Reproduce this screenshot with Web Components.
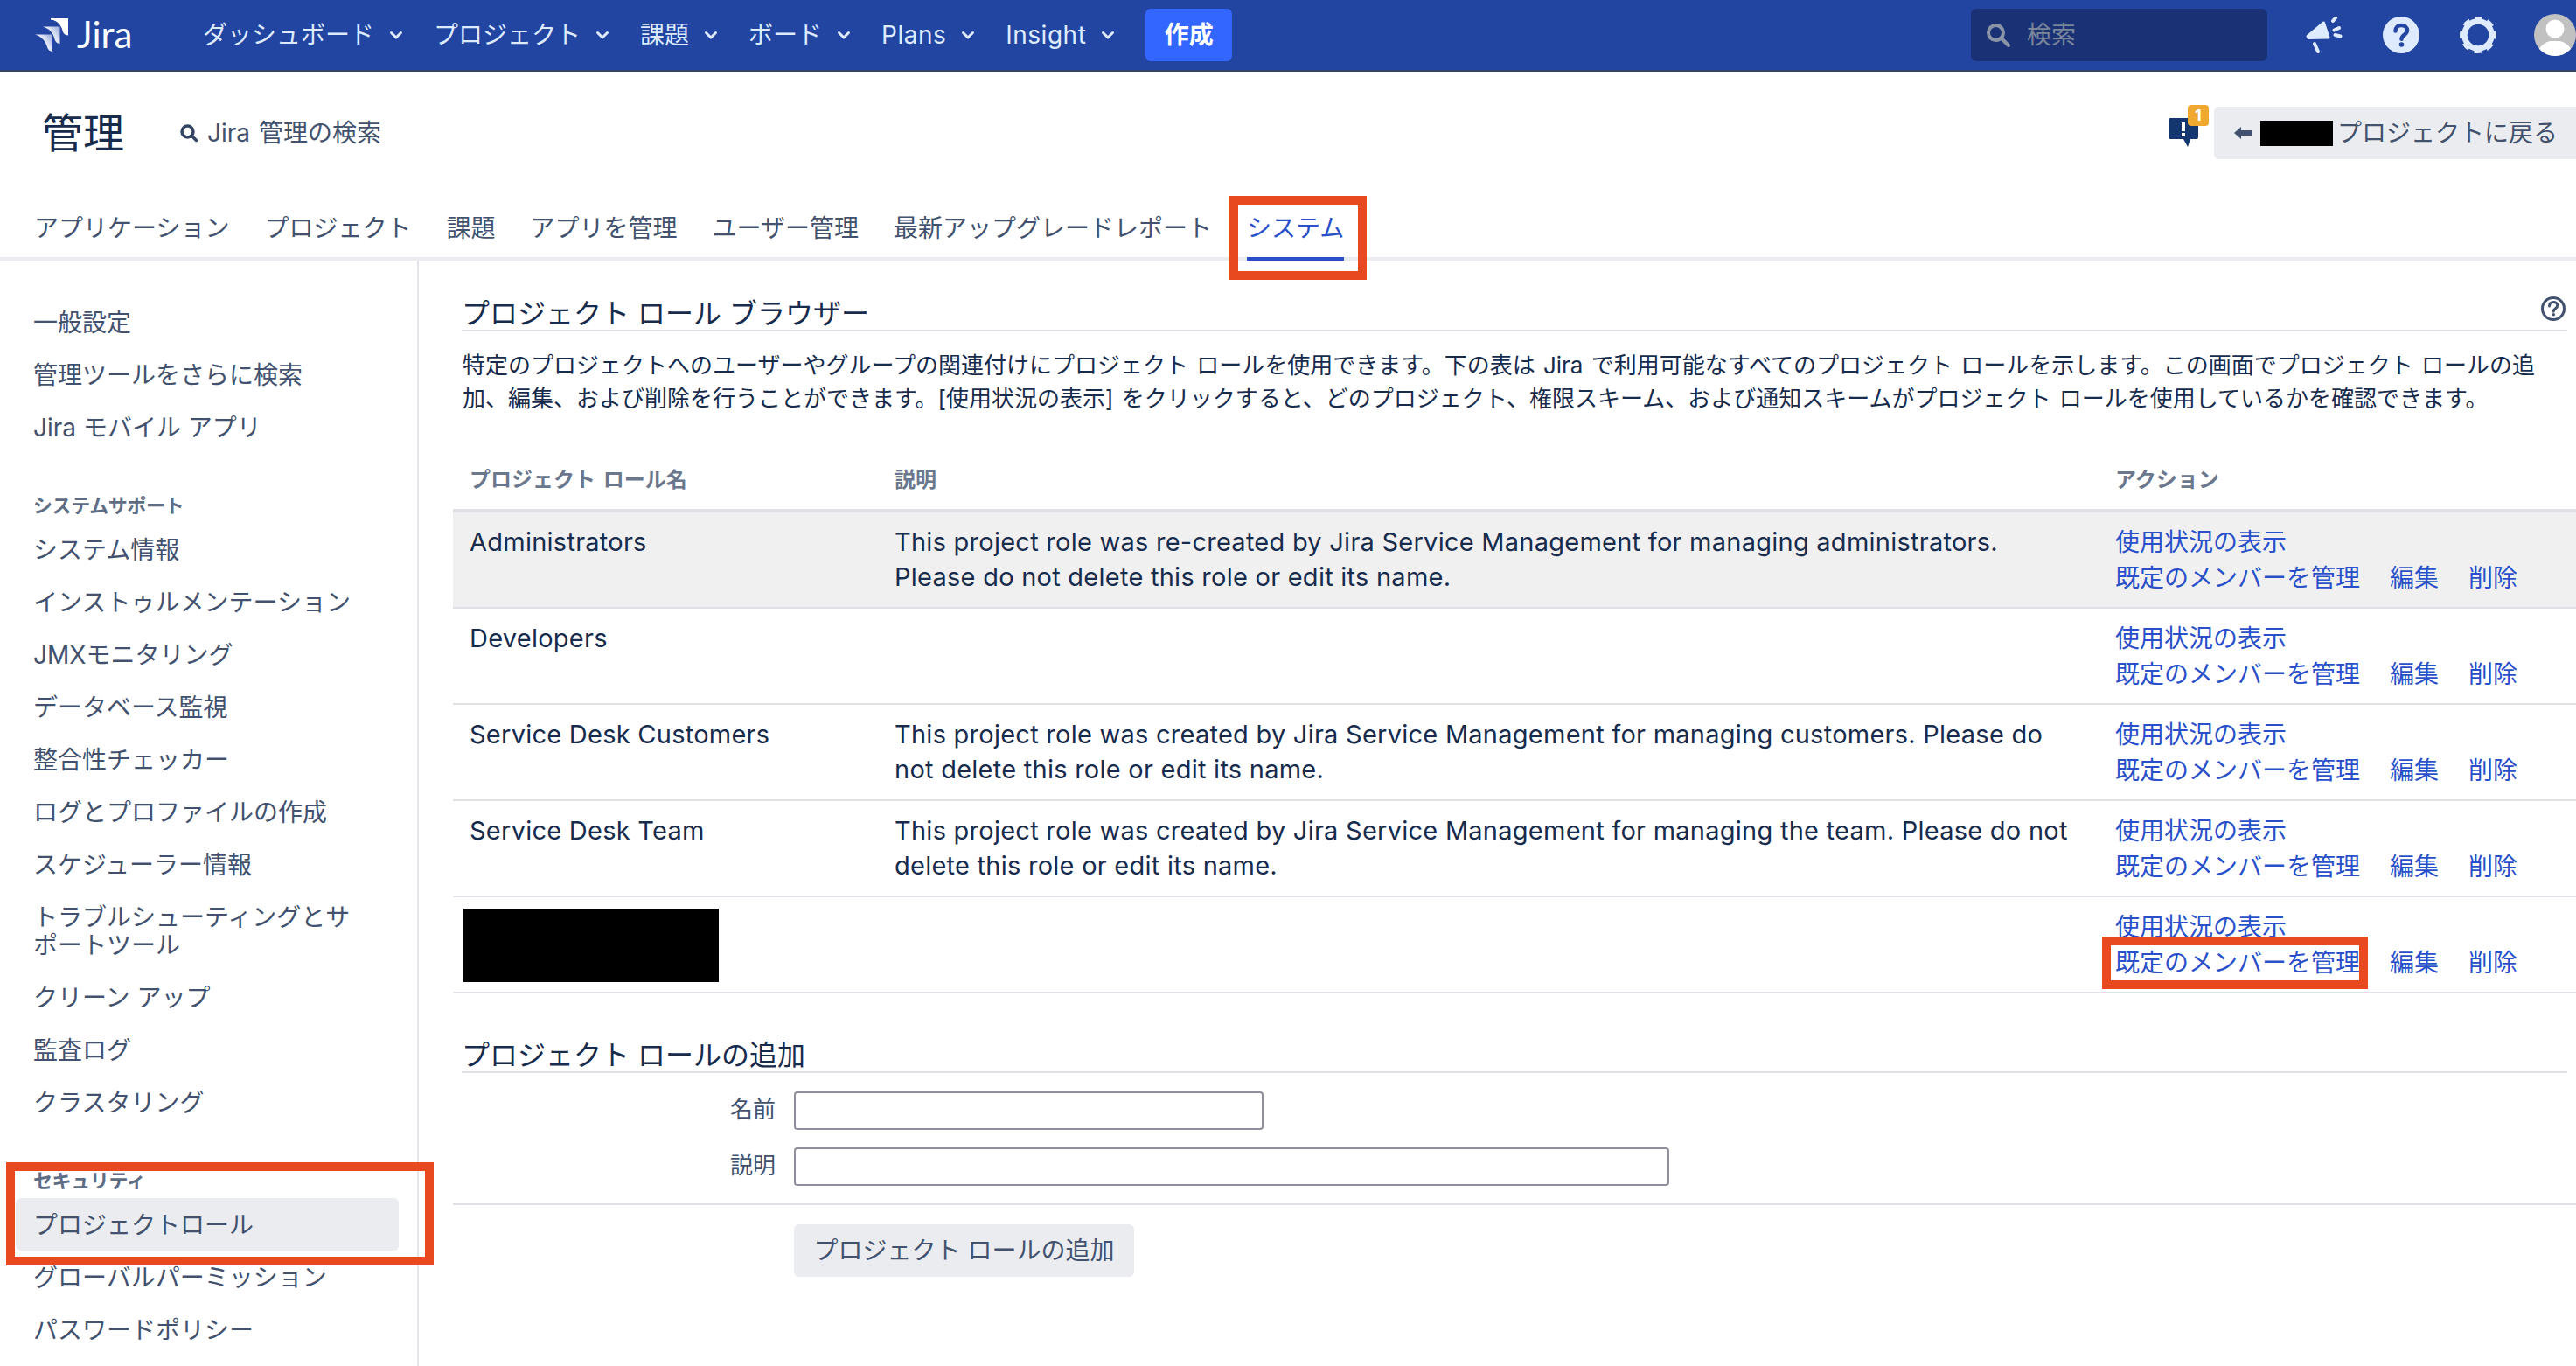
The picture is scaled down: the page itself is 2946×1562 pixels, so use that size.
<!DOCTYPE html>
<html lang="ja">
<head>
<meta charset="utf-8">
<title>プロジェクト ロール ブラウザー</title>
<style>
  html, body { margin: 0; padding: 0; background: #fff; }
  body { font: 28px/32px Inter, "Noto Sans CJK JP", sans-serif; color: #172b4d; }
</style>
</head>
<body>
<jira-app>
  <jira-topnav slot="nav">
    <nav-item>ダッシュボード</nav-item>
    <nav-item>プロジェクト</nav-item>
    <nav-item>課題</nav-item>
    <nav-item>ボード</nav-item>
    <nav-item latin>Plans</nav-item>
    <nav-item latin>Insight</nav-item>
  </jira-topnav>
  <admin-head slot="head"></admin-head>
  <admin-tabs slot="tabs">
    <tab-link>アプリケーション</tab-link>
    <tab-link>プロジェクト</tab-link>
    <tab-link>課題</tab-link>
    <tab-link>アプリを管理</tab-link>
    <tab-link>ユーザー管理</tab-link>
    <tab-link>最新アップグレードレポート</tab-link>
    <tab-link active marked>システム</tab-link>
  </admin-tabs>
  <side-nav slot="side">
    <side-link>一般設定</side-link>
    <side-link>管理ツールをさらに検索</side-link>
    <side-link>Jira モバイル アプリ</side-link>
    <side-head>システムサポート</side-head>
    <side-link>システム情報</side-link>
    <side-link>インストゥルメンテーション</side-link>
    <side-link>JMXモニタリング</side-link>
    <side-link>データベース監視</side-link>
    <side-link>整合性チェッカー</side-link>
    <side-link>ログとプロファイルの作成</side-link>
    <side-link>スケジューラー情報</side-link>
    <side-link>トラブルシューティングとサ<br>ポートツール</side-link>
    <side-link>クリーン アップ</side-link>
    <side-link>監査ログ</side-link>
    <side-link>クラスタリング</side-link>
    <side-head marked>セキュリティ</side-head>
    <side-link active>プロジェクトロール</side-link>
    <side-link>グローバルパーミッション</side-link>
    <side-link>パスワードポリシー</side-link>
  </side-nav>
  <role-browser slot="main">
    <role-row name="Administrators" highlight>This project role was re-created by Jira Service Management for managing administrators.<br>Please do not delete this role or edit its name.</role-row>
    <role-row name="Developers"></role-row>
    <role-row name="Service Desk Customers">This project role was created by Jira Service Management for managing customers. Please do<br>not delete this role or edit its name.</role-row>
    <role-row name="Service Desk Team">This project role was created by Jira Service Management for managing the team. Please do not<br>delete this role or edit its name.</role-row>
    <role-row redacted marked></role-row>
  </role-browser>
</jira-app>

<script>
const define = (name, css, html) => {
  customElements.define(name, class extends HTMLElement {
    constructor() {
      super();
      const root = this.attachShadow({ mode: 'open' });
      root.innerHTML = `<style>${css}</style>${typeof html === 'function' ? html(this) : html}`;
    }
    connectedCallback() {
      if (typeof html === 'function') {
        const style = this.shadowRoot.querySelector('style').outerHTML;
        this.shadowRoot.innerHTML = style + html(this);
      }
    }
  });
};

define('jira-app', `
  :host { display: block; width: 100%; height: 100vh; overflow: hidden; }
  .layout { display: flex; align-items: stretch; }
  ::slotted([slot=side]) { flex: none; }
  ::slotted([slot=main]) { flex: 1; min-width: 0; }
`, `<slot name="nav"></slot><slot name="head"></slot><slot name="tabs"></slot>
    <div class="layout"><slot name="side"></slot><slot name="main"></slot></div>`);

define('jira-topnav', `
  :host { display: flex; align-items: center; box-sizing: border-box; height: 82px; background: #2345a2; border-bottom: 2px solid #344563; color: #deebff; padding-left: 40px; }
  .logo { display: flex; align-items: center; width: 192px; flex: none; }
  .word { font: 400 42px/48px Lato, Inter, sans-serif; color: #fff; margin-left: 10px; position: relative; top: -1px; }
  .items { display: flex; gap: 35px; align-items: center; }
  .create { margin-left: 35px; height: 60px; width: 99px; border-radius: 6px; background: #3366ff; color: #fff; font-weight: 700; display: flex; align-items: center; justify-content: center; }
  .grow { flex: 1; }
  .search { width: 339px; height: 60px; border-radius: 6px; background: #1a3275; display: flex; align-items: center; padding-left: 16px; box-sizing: border-box; gap: 18px; color: #7a869a; }
  .icons { display: flex; align-items: center; margin-left: 44px; }
  .avatar { width: 48px; height: 48px; flex: none; margin-left: 43px; }
`, `
  <div class="logo">
    <svg width="38" height="38" viewBox="0 0 38 38">
      <defs>
        <linearGradient id="g" x1="1" y1="0" x2="0" y2="0.7"><stop offset="0" stop-color="#8fa3d6"/><stop offset=".45" stop-color="#dfe6f7"/><stop offset="1" stop-color="#fff"/></linearGradient>
      </defs>
      <path fill="url(#g)" d="M0 18.500H18.500L20 20V38C17 37.500 15.500 36.500 14 33C12.500 27 8 20.500 0 18.500Z"/>
      <path fill="url(#g)" d="M9 9.500H28.500V29C25 28.500 23.500 27 22.500 24C21 17 16.500 11.500 9 9.500Z"/>
      <path fill="#fff" d="M18 0H38V19.500C34 19 32.500 17.500 31.500 14C30 8 26 2.500 18 1.500Z"/>
    </svg>
    <span class="word">Jira</span>
  </div>
  <div class="items"><slot></slot></div>
  <div class="create">作成</div>
  <div class="grow"></div>
  <div class="search">
    <svg width="30" height="30" viewBox="0 0 30 30" fill="none" stroke="#8b93a6" stroke-width="4" stroke-linecap="round"><circle cx="12.500" cy="12.500" r="8.500"/><path d="M19 19l8 8"/></svg>
    <span>検索</span>
  </div>
  <div class="icons">
    <svg width="42" height="42" viewBox="0 0 42 42" fill="#deebff" stroke="#deebff" stroke-linecap="round" stroke-linejoin="round">
      <path stroke-width="3" d="M2 22.500 20.500 7 26 24 3 24.500Z"/>
      <path stroke-width="4" fill="none" d="M10 31l4 9M31 5l3-3.500M32.500 15.500 38 13M33.500 21l6 1.500"/>
    </svg>
    <svg style="margin-left:46px" width="42" height="42" viewBox="0 0 42 42"><circle cx="21" cy="21" r="21" fill="#deebff"/><path d="M14.500 16.500c0-4 3-6.500 6.800-6.500 3.900 0 6.700 2.500 6.700 5.800 0 5.200-6.500 4.900-6.500 10" fill="none" stroke="#2345a2" stroke-width="4.500" stroke-linecap="round"/><circle cx="21.500" cy="32" r="2.800" fill="#2345a2"/></svg>
    <svg style="margin-left:46px" width="42" height="42" viewBox="0 0 42 42" fill="none" stroke="#deebff"><circle cx="21" cy="21" r="15.500" stroke-width="6.500"/><circle cx="21" cy="21" r="18" stroke-width="6" stroke-dasharray="8 6.137" stroke-dashoffset="4" transform="rotate(-90 21 21)"/></svg>
    <svg class="avatar" viewBox="0 0 48 48"><defs><clipPath id="c"><circle cx="24" cy="24" r="24"/></clipPath></defs><g clip-path="url(#c)"><rect width="48" height="48" fill="#c1c1c1"/><circle cx="24" cy="17" r="10.500" fill="#fff"/><path d="M4 48c0-11 9-16 15-17h10c6 1 15 6 15 17z" fill="#fff"/></g></svg>
  </div>
`);

define('nav-item', `
  :host { display: flex; align-items: center; gap: 17px; color: #deebff; white-space: nowrap; }
  :host([latin]) { letter-spacing: .5px; }
`, `<slot></slot><svg width="16" height="16" viewBox="0 0 16 16" fill="none" stroke="#deebff" stroke-width="3" stroke-linecap="round" stroke-linejoin="round"><path d="M2.500 5.500 8 11l5.500-5.500"/></svg>`);

define('admin-head', `
  :host { display: flex; align-items: center; box-sizing: border-box; height: 100px; padding: 40px 0 0 48px; }
  h1 { margin: 0; font: 400 47px/60px Inter, "Noto Sans CJK JP", sans-serif; color: #172b4d; width: 157px; flex: none; }
  .find { display: flex; align-items: center; gap: 10px; color: #42526e; word-spacing: 2px; }
  .grow { flex: 1; }
  .note { position: relative; width: 46px; height: 50px; margin-right: 6px; flex: none; }
  .note svg { position: absolute; left: 0; top: 7px; }
  .badge { position: absolute; left: 22px; top: -7px; width: 24px; height: 24px; border-radius: 4px; background: #f0a92e; color: #fff; font: 700 18px/24px Inter, sans-serif; text-align: center; }
  .back { display: flex; align-items: center; height: 60px; width: 414px; box-sizing: border-box; padding-left: 23px; background: #ebecf0; border-radius: 6px 0 0 6px; color: #42526e; white-space: nowrap; }
  .ink { display: inline-block; width: 83px; height: 29px; background: #000; margin: 0 5px 0 9px; flex: none; }
`, `
  <h1>管理</h1>
  <div class="find">
    <svg width="22" height="22" viewBox="0 0 22 22" fill="none" stroke="#344563" stroke-width="3.500" stroke-linecap="round"><circle cx="9.500" cy="9.500" r="6.500"/><path d="M14.500 14.500l5 5"/></svg>
    <span>Jira 管理の検索</span>
  </div>
  <div class="grow"></div>
  <div class="note">
    <svg width="34" height="34" viewBox="0 0 34 34"><path fill="#14366f" d="M2 1h30a2 2 0 0 1 2 2v20a2 2 0 0 1-2 2H25l-3 9-5-9H2a2 2 0 0 1-2-2V3a2 2 0 0 1 2-2z"/><rect x="15" y="6" width="4" height="10" fill="#fff"/><rect x="15" y="18" width="4" height="4" fill="#fff"/></svg>
    <div class="badge">1</div>
  </div>
  <div class="back">
    <svg width="21" height="14" viewBox="0 0 21 14" fill="#42526e"><path d="M0 7 8 0v4h13v6H8v4z"/></svg>
    <span class="ink"></span><span>プロジェクトに戻る</span>
  </div>
`);

define('admin-tabs', `
  :host { display: flex; gap: 40px; box-sizing: border-box; margin-top: 42px; padding-left: 39px; border-bottom: 4px solid #ebecf0; }
`, `<slot></slot>`);

define('tab-link', `
  :host { display: block; position: relative; padding: 21px 0 17px; line-height: 32px; color: #42526e; white-space: nowrap; }
  :host([active]) { color: #2a50c9; }
  :host([active])::after { content: ""; position: absolute; left: 0; right: 0; bottom: -4px; height: 4px; background: #2a50c9; }
  red-box { left: -20px; right: -26px; top: 0; bottom: -26px; }
`, el => `<slot></slot>${el.hasAttribute('marked') ? '<red-box></red-box>' : ''}`);

define('red-box', `
  :host { display: block; position: absolute; box-sizing: border-box; border: 10px solid #e8491f; pointer-events: none; z-index: 5; }
`, ``);

define('side-nav', `
  :host { display: block; box-sizing: border-box; width: 479px; border-right: 2px solid #e4e5ea; padding: 40px 21px 0 18px; min-height: 1264px; }
`, `<slot></slot>`);

define('side-link', `
  :host { display: block; padding: 15px 20px 13px; line-height: 32px; color: #42526e; border-radius: 6px; }
  :host([active]) { background: #ebecf0; }
`, `<slot></slot>`);

define('side-head', `
  :host { display: block; position: relative; padding: 44px 20px 4px; font-size: 22px; letter-spacing: -.4px; line-height: 32px; font-weight: 700; color: #5e6c84; }
  red-box { left: -11px; right: -40px; top: 39px; bottom: -77px; }
`, el => `<slot></slot>${el.hasAttribute('marked') ? '<red-box></red-box>' : ''}`);

define('role-browser', `
  :host { display: block; padding-top: 39px; }
  .wrap { margin-left: 39px; }
  h2 { margin: 0 10px 0 10px; padding: 4px 0 0; font: 400 32px/36px Inter, "Noto Sans CJK JP", sans-serif; color: #172b4d; border-bottom: 2px solid #dfe1e6; position: relative; }
  h2 svg { position: absolute; right: 1px; top: 1px; }
  .desc { margin: 20px 0 0 11px; font-size: 26px; line-height: 38px; word-spacing: 2px; color: #172b4d; white-space: nowrap; overflow: hidden; }
  .thead { display: grid; grid-template-columns: 486px 1396px 1fr; padding: 58px 0 17px; border-bottom: 4px solid #dfe1e6; color: #6b778c; font-size: 24px; font-weight: 700; line-height: 32px; word-spacing: 3px; }
  .thead span { padding-left: 19px; }
  h2.add { margin-top: 49px; }
  .row { display: grid; grid-template-columns: 359px 537px; column-gap: 21px; align-items: center; margin: 20px 0 0 10px; }
  .row.first { margin-top: 21px; }
  .row.wide { grid-template-columns: 359px 1001px; }
  label { text-align: right; color: #42526e; font-size: 26px; line-height: 32px; margin-top: -3px; }
  input { box-sizing: border-box; height: 44px; width: 100%; border: 2px solid #8f8f9b; border-radius: 4px; background: #fff; padding: 0 8px; margin: 0; outline: none; }
  .rule { border-top: 2px solid #dfe1e6; margin-top: 20px; }
  .btn { display: flex; align-items: center; justify-content: center; width: 389px; height: 60px; margin: 22px 0 0 390px; border-radius: 6px; background: #ebecf0; color: #42526e; white-space: nowrap; }
`, `
  <div class="wrap">
    <h2>プロジェクト ロール ブラウザー
      <svg width="30" height="30" viewBox="0 0 30 30" fill="none" stroke="#42526e"><circle cx="15" cy="15" r="12.500" stroke-width="3"/><path d="M10.500 12c0-2.800 2-4.500 4.700-4.500 2.600 0 4.500 1.600 4.500 3.900 0 3.500-4.400 3.300-4.400 6.700" stroke-width="3" stroke-linecap="round"/><circle cx="15.300" cy="21.800" r="1.800" fill="#42526e" stroke="none"/></svg>
    </h2>
    <div class="desc">特定のプロジェクトへのユーザーやグループの関連付けにプロジェクト ロールを使用できます。下の表は Jira で利用可能なすべてのプロジェクト ロールを示します。この画面でプロジェクト ロールの追<br>加、編集、および削除を行うことができます。[使用状況の表示] をクリックすると、どのプロジェクト、権限スキーム、および通知スキームがプロジェクト ロールを使用しているかを確認できます。</div>
    <div class="thead"><span>プロジェクト ロール名</span><span>説明</span><span>アクション</span></div>
    <div><slot></slot></div>
    <h2 class="add">プロジェクト ロールの追加</h2>
    <div class="row first"><label>名前</label><input type="text"></div>
    <div class="row wide"><label>説明</label><input type="text"></div>
    <div class="rule"></div>
    <div class="btn">プロジェクト ロールの追加</div>
  </div>
`);

define('role-row', `
  :host { display: grid; grid-template-columns: 486px 1396px 1fr; box-sizing: border-box; height: 110px; border-bottom: 2px solid #dfe1e6; padding-top: 14px; line-height: 40px; color: #172b4d; }
  :host([highlight]) { background: #f0f0f0; }
  .c { padding-left: 19px; white-space: nowrap; }
  .t { font-size: 29px; letter-spacing: .25px; }
  .ink { display: block; width: 292px; height: 84px; background: #000; margin: -1px 0 0 12px; }
  .c.first { padding-left: 0; }
  .links { display: flex; color: #2a50c9; margin-top: 1px; }
  .links span { position: relative; }
  .e { margin-left: 34px; }
  red-box { left: -15px; right: -9px; top: -10px; bottom: -10px; }
`, el => `
  <div class="c t${el.hasAttribute('redacted') ? ' first' : ''}">${el.hasAttribute('redacted') ? '<span class="ink"></span>' : el.getAttribute('name')}</div>
  <div class="c t"><slot></slot></div>
  <div class="c">
    <div style="color:#2a50c9">使用状況の表示</div>
    <div class="links"><span>既定のメンバーを管理${el.hasAttribute('marked') ? '<red-box></red-box>' : ''}</span><span class="e">編集</span><span class="e">削除</span></div>
  </div>
`);
</script>
</body>
</html>
